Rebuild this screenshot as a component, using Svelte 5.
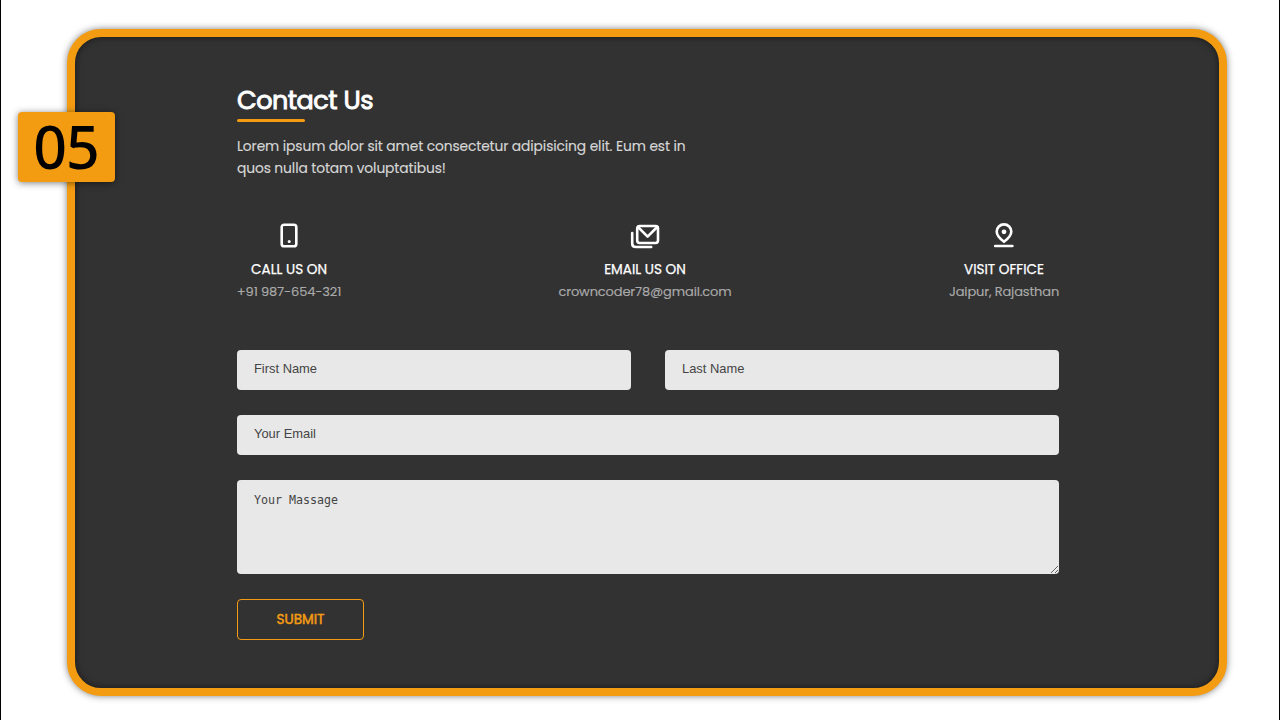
<script>
  const contacts = [
    { icon: 'phone', title: 'Call us on', detail: '+91 987-654-321' },
    { icon: 'mail', title: 'Email us on', detail: 'crowncoder78@gmail.com' },
    { icon: 'pin', title: 'Visit office', detail: 'Jaipur, Rajasthan' },
  ];
</script>

<div class="page">
  <div class="frame">
    <span class="number">05</span>
    <section class="contact">
      <h2>Contact Us</h2>
      <p class="intro">Lorem ipsum dolor sit amet consectetur adipisicing elit. Eum est in<br />quos nulla totam voluptatibus!</p>

      <div class="contacts">
        {#each contacts as c}
          <div class="item {c.icon}">
            {#if c.icon === 'phone'}
              <svg width="30" height="28" viewBox="0 0 30 28">
                <rect x="7.7" y="2.7" width="14.6" height="21.6" rx="2.4" />
                <circle class="dot" cx="15.2" cy="19.5" r="1.5" />
              </svg>
            {:else if c.icon === 'mail'}
              <svg width="30" height="28" viewBox="0 0 30 28">
                <rect x="7.2" y="4" width="20.8" height="17" rx="2.4" />
                <path d="M8 5 17.6 14.6 27.2 5" />
                <path d="M2.2 11V21.4Q2.2 25 6 25H21.2" />
              </svg>
            {:else}
              <svg width="30" height="28" viewBox="0 0 30 28">
                <path d="M15 19.8C10.6 16.6 7.7 13.4 7.7 9.6A7.3 7.2 0 0 1 22.3 9.6C22.3 13.4 19.4 16.6 15 19.8Z" />
                <circle class="dot" cx="15" cy="9.8" r="2.4" />
                <path d="M6.2 24H23.4" />
              </svg>
            {/if}
            <h3>{c.title}</h3>
            <span>{c.detail}</span>
          </div>
        {/each}
      </div>

      <form onsubmit={(e) => e.preventDefault()}>
        <input type="text" placeholder="First Name" />
        <input type="text" placeholder="Last Name" />
        <input class="wide" type="email" placeholder="Your Email" />
        <textarea class="wide" placeholder="Your Massage"></textarea>
        <button type="submit">Submit</button>
      </form>
    </section>
  </div>
</div>

<style>
  :global(body) { margin: 0; background: #fff; }

  .page {
    box-sizing: border-box;
    width: 1280px;
    height: 720px;
    padding: 29px 52px 24px 66px;
    border: solid #000;
    border-width: 0 1px;
    background: #fff;
    overflow: hidden;
    font-family: Poppins, Inter, sans-serif;
  }
  .frame {
    position: relative;
    box-sizing: border-box;
    width: 1160px;
    height: 667px;
    padding: 45px 160px 0 162px;
    border: 8px solid #f39c12;
    border-radius: 34px;
    background: #323232;
    box-shadow: 0 0 7px rgba(0, 0, 0, 0.5), inset 0 0 7px rgba(0, 0, 0, 0.55);
  }
  .number {
    position: absolute;
    left: -57px;
    top: 75px;
    width: 97px;
    height: 70px;
    border-radius: 4px;
    background: #f39c12;
    box-shadow: 0 1px 7px rgba(0, 0, 0, 0.5);
    color: #000;
    font: 500 59px/69px "Noto Sans", sans-serif;
    letter-spacing: -1px;
    text-indent: -1px;
    text-align: center;
  }

  h2 {
    margin: 0;
    color: #fff;
    font-size: 25.5px;
    font-weight: 400;
    line-height: 37px;
    letter-spacing: -0.5px;
    -webkit-text-stroke: 0.9px #fff;
  }
  h2::after {
    content: '';
    display: block;
    width: 68px;
    height: 3px;
    border-radius: 2px;
    background: #f39c12;
  }
  .intro {
    margin: 14px 0 0;
    color: #d6d6d6;
    font-size: 13.8px;
    line-height: 22px;
    letter-spacing: -0.1px;
    white-space: nowrap;
    -webkit-text-stroke: 0.15px #d6d6d6;
  }

  .contacts {
    display: flex;
    justify-content: space-between;
    margin-top: 41.8px;
  }
  .item {
    display: flex;
    flex-direction: column;
    align-items: center;
    width: 104px;
    white-space: nowrap;
  }
  .item.mail { width: 173px; }
  .item.pin { width: 110px; }
  .item svg {
    margin-bottom: 9.4px;
    fill: none;
    stroke: #fff;
    stroke-width: 2.6;
    stroke-linecap: round;
    stroke-linejoin: round;
  }
  .item .dot { fill: #fff; stroke: none; }
  h3 {
    margin: 0;
    color: #fff;
    font-size: 13.6px;
    font-weight: 400;
    line-height: 22px;
    text-transform: uppercase;
    -webkit-text-stroke: 0.25px #fff;
  }
  .item span {
    color: #aaa;
    font-size: 13px;
    line-height: 22px;
    letter-spacing: -0.14px;
    -webkit-text-stroke: 0.15px #aaa;
  }

  form {
    display: grid;
    grid-template-columns: 1fr 1fr;
    gap: 25.5px 34px;
    margin-top: 47.3px;
  }
  input, textarea {
    box-sizing: border-box;
    width: 100%;
    height: 39.5px;
    margin: 0;
    padding: 0 17px 3px;
    border: 0;
    border-radius: 4px;
    outline: none;
    background: #e8e8e8;
    font: 12.9px "Liberation Sans", Arial, sans-serif;
  }
  textarea {
    display: block;
    height: 93.5px;
    padding: 13px 17px;
    font: 11.65px "DejaVu Sans Mono", monospace;
  }
  .wide { grid-column: 1 / -1; }
  ::placeholder { color: #444; opacity: 1; }
  button {
    width: 127px;
    height: 40.5px;
    padding: 0;
    border: 1.5px solid #f39c12;
    border-radius: 4px;
    background: transparent;
    color: #f39c12;
    font: 400 13.6px Poppins, Inter, sans-serif;
    text-transform: uppercase;
    -webkit-text-stroke: 0.5px #f39c12;
  }
</style>
